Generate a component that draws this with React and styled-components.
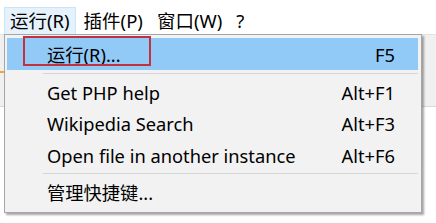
import React from "react";
import styled, { createGlobalStyle } from "styled-components";

const Global = createGlobalStyle`
  html, body { margin: 0; padding: 0; background: #fff; }
  body { font-family: "Noto Sans", "Noto Sans CJK SC", sans-serif; }
  * { box-sizing: border-box; }
`;

const Window = styled.div`
  position: relative;
  width: 436px;
  height: 223px;
  overflow: hidden;
  background: #fff;
`;

const MenuBar = styled.div`
  display: flex;
  align-items: flex-start;
  height: 35px;
  padding: 7px 0 0 4px;
  gap: 2px;
  background: #fff;
  border-bottom: 1px solid #e3e3e3;
`;

const TopItem = styled.div`
  height: 28px;
  padding: 0 5px;
  font-size: 18.5px;
  line-height: 26px;
  color: #000;
  border: 1px solid ${(p) => (p.$open ? "#cce4f7" : "transparent")};
  border-bottom: none;
  background: ${(p) => (p.$open ? "#e5f1fb" : "transparent")};
  white-space: nowrap;
`;

const Toolbar = styled.div`
  height: 72px;
  background: #f0f0f0;
  border-bottom: 1px solid #d9d9d9;
  display: flex;
  flex-direction: column;
  justify-content: center;
`;

const TabMark = styled.div`
  width: 4px;
  height: 2px;
  margin-top: 2px;
  background: #f3a43b;
`;

const Dropdown = styled.div`
  position: absolute;
  left: 4px;
  top: 34px;
  width: 418px;
  height: 179px;
  background: #f2f2f2;
  border: 1px solid #a6a6a6;
  box-shadow: 2px 2px 2px rgba(0, 0, 0, 0.35);
  padding: 3px 3px 2px 2px;
  display: flex;
  flex-direction: column;
`;

const Item = styled.div`
  position: relative;
  display: flex;
  align-items: center;
  justify-content: space-between;
  height: ${(p) => p.$h || 32}px;
  padding: 0 23px 0 40px;
  font-size: 18.3px;
  color: #000;
  background: ${(p) => (p.$active ? "#91c9f7" : "transparent")};
  white-space: nowrap;
`;

const Shortcut = styled.span`
  text-align: right;
`;

const Highlight = styled.div`
  position: absolute;
  left: 16px;
  top: -2px;
  width: 128px;
  height: 30px;
  border: 2px solid #c4313e;
  pointer-events: none;
`;

const Separator = styled.div`
  height: ${(p) => p.$h || 6}px;
  display: flex;
  align-items: center;
  padding-left: 36px;
  &::before {
    content: "";
    flex: 1;
    height: 1px;
    background: #d6d6d6;
  }
`;

export default function App() {
  return (
    <Window>
      <Global />
      <MenuBar>
        <TopItem $open>运行(R)</TopItem>
        <TopItem>插件(P)</TopItem>
        <TopItem>窗口(W)</TopItem>
        <TopItem>?</TopItem>
      </MenuBar>
      <Toolbar>
        <TabMark />
      </Toolbar>
      <Dropdown>
        <Item $active>
          <span>运行(R)...</span>
          <Shortcut>F5</Shortcut>
          <Highlight />
        </Item>
        <Separator />
        <Item>
          <span>Get PHP help</span>
          <Shortcut>Alt+F1</Shortcut>
        </Item>
        <Item $h={31}>
          <span>Wikipedia Search</span>
          <Shortcut>Alt+F3</Shortcut>
        </Item>
        <Item>
          <span>Open file in another instance</span>
          <Shortcut>Alt+F6</Shortcut>
        </Item>
        <Separator $h={5} />
        <Item>
          <span>管理快捷键...</span>
        </Item>
      </Dropdown>
    </Window>
  );
}
